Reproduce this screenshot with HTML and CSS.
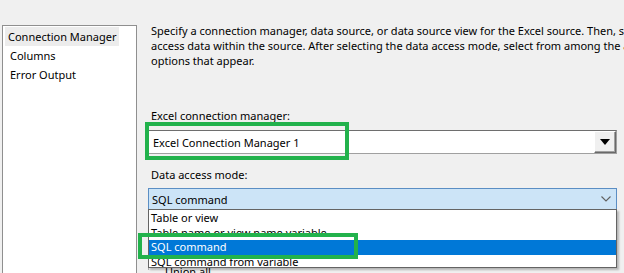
FILE: index.html
```
<!DOCTYPE html>
<html>
<head>
<meta charset="utf-8">
<link rel="stylesheet" href="styles.css">
</head>
<body>
<div class="page">
  <div class="sidebar">
    <div class="nav-item"><span class="nav-selected">Connection Manager</span></div>
    <div class="nav-item">Columns</div>
    <div class="nav-item">Error Output</div>
  </div>
  <div class="main">
    <div class="desc">
      <div class="line">Specify a connection manager, data source, or data source view for the Excel source. Then, select how to</div>
      <div class="line">access data within the source. After selecting the data access mode, select from among the additional data access</div>
      <div class="line">options that appear.</div>
    </div>
    <div class="label label-first">Excel connection manager:</div>
    <div class="combo-classic">
      <div class="combo-value">Excel Connection Manager 1</div>
      <div class="combo-button">
        <svg width="10" height="6" viewBox="0 0 10 6"><path d="M0 0H10L5 6Z" fill="#000"/></svg>
      </div>
      <div class="hl hl-conn"></div>
    </div>
    <div class="label label-second">Data access mode:</div>
    <div class="mode-wrap">
      <div class="combo-modern">
        <div class="combo-value">SQL command</div>
        <svg class="chevron" width="10" height="6" viewBox="0 0 10 6"><path d="M0.5 0.5L5 5L9.5 0.5" fill="none" stroke="#606060" stroke-width="1.1"/></svg>
      </div>
      <div class="under">
        <div class="under-text">Union all</div>
      </div>
      <div class="droplist">
        <div class="opt">Table or view</div>
        <div class="opt">Table name or view name variable</div>
        <div class="opt opt-selected">SQL command</div>
        <div class="opt">SQL command from variable</div>
      </div>
      <div class="hl hl-sql"></div>
    </div>
  </div>
</div>
</body>
</html>
```
FILE: styles.css
```
* { box-sizing: border-box; }
html, body {
  margin: 0;
  padding: 0;
  background: #f0f0f0;
}
body {
  font-family: "Noto Sans", "Open Sans", sans-serif;
  font-size: 11px;
  color: #000;
}
.page {
  display: flex;
  width: 624px;
  height: 273px;
  overflow: hidden;
}
.sidebar {
  flex: 0 0 135px;
  margin: 25px 0 0 2px;
  background: #fff;
  border: 1px solid #8f8f8f;
  border-bottom: none;
  padding: 1px 0 0 2px;
}
.nav-item {
  height: 19px;
  line-height: 19px;
  white-space: nowrap;
}
.nav-item:not(:first-child) { padding-left: 5px; }
.nav-selected {
  display: inline-block;
  background: #ececec;
  padding: 0 3px 0 3px;
}
.main {
  flex: 1;
  padding-left: 11px;
  padding-right: 7px;
  min-width: 0;
}
.desc {
  margin-top: 23px;
  padding-left: 3px;
  line-height: 15px;
  white-space: nowrap;
  overflow: hidden;
  margin-right: -7px;
}
.label {
  padding-left: 3px;
  line-height: 15px;
  white-space: nowrap;
}
.label-first { margin-top: 40px; }
.label-second { margin-top: 13px; }
.combo-classic {
  position: relative;
  margin-top: 7px;
  height: 24px;
  background: #fff;
  border: 1px solid #a0a0a0;
  border-top-color: #6e6e6e;
  border-left-color: #6e6e6e;
  display: flex;
  align-items: center;
}
.combo-value {
  flex: 1;
  padding-left: 4px;
  white-space: nowrap;
}
.combo-button {
  width: 22px;
  height: 22px;
  background: #f0f0f0;
  border: 1px solid #fff;
  border-right-color: #696969;
  border-bottom-color: #696969;
  box-shadow: inset -1px -1px 0 #a0a0a0;
  display: flex;
  align-items: center;
  justify-content: center;
}
.mode-wrap {
  position: relative;
  margin-top: 6px;
}
.combo-modern {
  height: 22px;
  background: #cce4f7;
  border: 1px solid #5b8ec4;
  display: flex;
  align-items: center;
}
.combo-modern .combo-value { padding-left: 3px; }
.chevron { margin-right: 5px; }
.under {
  height: 60px;
  border-left: 1px solid #b0b0b0;
  position: relative;
}
.under-text {
  position: absolute;
  left: 16px;
  top: 54px;
  line-height: 15px;
}
.droplist {
  position: absolute;
  left: 0;
  top: 21px;
  width: 469px;
  height: 59px;
  background: #fff;
  border: 1px solid #646464;
  box-shadow: 2px 2px 2px rgba(0,0,0,0.25);
  padding-top: 1px;
  overflow: hidden;
}
.opt {
  height: 14.6px;
  line-height: 14.6px;
  padding-left: 2px;
  white-space: nowrap;
}
.opt-selected {
  background: #0078d7;
  color: #fff;
}
.hl {
  position: absolute;
  border: 4px solid #22b24c;
  pointer-events: none;
}
.hl-conn {
  left: -4px;
  top: -9px;
  width: 204px;
  height: 38px;
}
.hl-sql {
  left: -10px;
  top: 45px;
  width: 220px;
  height: 26px;
}
```
